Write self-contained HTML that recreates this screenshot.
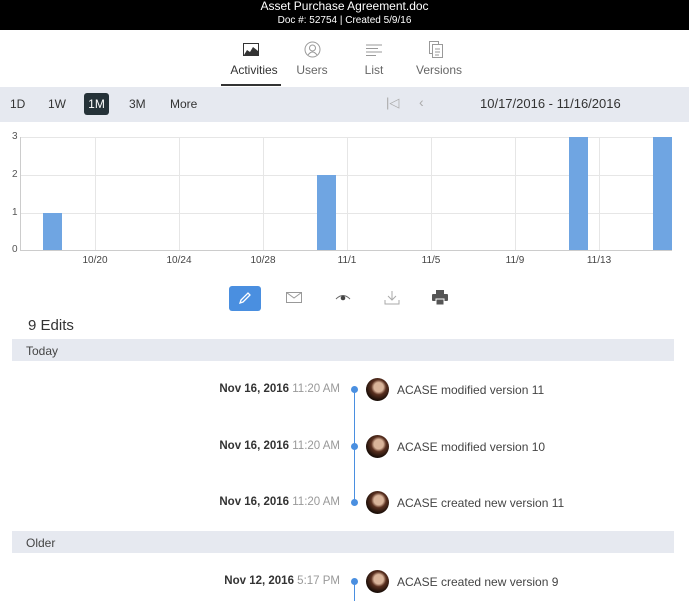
<!DOCTYPE html><html><head><style>
*{margin:0;padding:0;box-sizing:border-box}
body{width:689px;height:600px;overflow:hidden;background:#fff;font-family:"Liberation Sans",sans-serif;position:relative;color:#333}
.a{position:absolute;white-space:nowrap}
.t{font-size:12px;color:#666;text-align:center;width:70px}
.f{font-size:12px;color:#333;top:97px}
.yl{font-size:10px;color:#555;left:0;width:16px;text-align:left}
.xl{font-size:10px;color:#444;top:255px;width:40px;text-align:center}
.gh{left:20px;width:652px;height:1px;background:#e6e6e6}
.gv{top:137px;width:1px;height:113px;background:#e6e6e6}
.bar{background:#6fa5e2;width:19px}
.sec{left:12px;width:662px;height:22px;background:#e6e9f0;font-size:12px;color:#444;padding:5px 0 0 14px}
.dt{font-size:11.5px;width:330px;text-align:right;left:10px;color:#333}
.dt b{color:#333}.dt span{color:#999}
.dot{left:351px;width:7px;height:7px;border-radius:50%;background:#4a8fe0}
.av{left:366px;width:23px;height:23px;border-radius:50%;background:radial-gradient(circle at 55% 40%,#d9b49a 0 25%,#5a3020 40%,#1a0e08 70%)}
.tx{left:397px;font-size:12px;color:#444}
</style></head><body>
<div class="a" style="left:0;top:0;width:689px;height:30px;background:#000"></div>
<div class="a" style="left:0;top:-1px;width:689px;text-align:center;color:#fff;font-size:12px">Asset Purchase Agreement.doc</div>
<div class="a" style="left:0;top:15px;width:689px;text-align:center;color:#fff;font-size:10px">Doc #: 52754 | Created 5/9/16</div>
<svg class="a" style="left:243px;top:43px" width="16" height="13"><rect x="0.5" y="0.5" width="15" height="12" fill="none" stroke="#333"/><path d="M1 12 L4 7 L7 9 L10 4 L15 8 L15 12Z" fill="#333"/></svg>
<svg class="a" style="left:304px;top:41px" width="17" height="17"><circle cx="8.5" cy="8.5" r="7.5" fill="none" stroke="#999"/><circle cx="8.5" cy="7" r="3" fill="none" stroke="#999"/><path d="M4 14 Q8.5 8 13 14" fill="none" stroke="#999"/></svg>
<svg class="a" style="left:366px;top:44px" width="16" height="12" stroke="#999"><path d="M0 1H16M0 4.5H12M0 8H16M0 11.5H10"/></svg>
<svg class="a" style="left:429px;top:41px" width="14" height="17" fill="none" stroke="#999"><rect x="0.5" y="0.5" width="9" height="12"/><rect x="3.5" y="3.5" width="10" height="13" fill="#fff"/><path d="M6 8H11M6 11H11M6 14H10"/></svg>
<div class="a t" style="left:219px;top:63px;color:#333">Activities</div>
<div class="a t" style="left:277px;top:63px">Users</div>
<div class="a t" style="left:339px;top:63px">List</div>
<div class="a t" style="left:404px;top:63px">Versions</div>
<div class="a" style="left:221px;top:84px;width:60px;height:2px;background:#333"></div>
<div class="a" style="left:0;top:87px;width:689px;height:35px;background:#e6e9f0"></div>
<div class="a f" style="left:10px">1D</div>
<div class="a f" style="left:48px">1W</div>
<div class="a" style="left:84px;top:93px;width:25px;height:22px;background:#253238;border-radius:3px;color:#fff;font-size:12px;text-align:center;padding-top:4px">1M</div>
<div class="a f" style="left:129px">3M</div>
<div class="a f" style="left:170px">More</div>
<div class="a" style="left:386px;top:95px;font-size:13px;color:#aaa">|◁</div>
<div class="a" style="left:419px;top:94px;font-size:14px;color:#aaa">‹</div>
<div class="a" style="left:480px;top:96px;font-size:13px;color:#333">10/17/2016 - 11/16/2016</div>
<div class="a gh" style="top:137px"></div><div class="a gh" style="top:175px"></div><div class="a gh" style="top:213px"></div><div class="a gh" style="top:250px;background:#ccc"></div>
<div class="a gv" style="left:20px;background:#ccc"></div>
<div class="a gv" style="left:95px"></div><div class="a gv" style="left:179px"></div><div class="a gv" style="left:263px"></div><div class="a gv" style="left:347px"></div><div class="a gv" style="left:431px"></div><div class="a gv" style="left:515px"></div><div class="a gv" style="left:599px"></div>
<div class="a yl" style="top:131px;left:12px">3</div><div class="a yl" style="top:169px;left:12px">2</div><div class="a yl" style="top:207px;left:12px">1</div><div class="a yl" style="top:244px;left:12px">0</div>
<div class="a bar" style="left:43px;top:213px;height:37px"></div>
<div class="a bar" style="left:317px;top:175px;height:75px"></div>
<div class="a bar" style="left:569px;top:137px;height:113px"></div>
<div class="a bar" style="left:653px;top:137px;height:113px"></div>
<div class="a xl" style="left:75px">10/20</div><div class="a xl" style="left:159px">10/24</div><div class="a xl" style="left:243px">10/28</div><div class="a xl" style="left:327px">11/1</div><div class="a xl" style="left:411px">11/5</div><div class="a xl" style="left:495px">11/9</div><div class="a xl" style="left:579px">11/13</div>
<div class="a" style="left:229px;top:286px;width:32px;height:25px;background:#4a8fe0;border-radius:3px"></div>
<svg class="a" style="left:238px;top:291px" width="14" height="14" fill="none" stroke="#fff" stroke-width="1.3"><path d="M2 12 L3 9 L10 2 L12 4 L5 11Z"/></svg>
<svg class="a" style="left:286px;top:292px" width="16" height="11" fill="none" stroke="#999"><rect x="0.5" y="0.5" width="15" height="10"/><path d="M0.5 0.5 L8 6 L15.5 0.5"/></svg>
<svg class="a" style="left:335px;top:293px" width="16" height="9"><path d="M1 6 Q8 -1 15 6" fill="none" stroke="#666"/><circle cx="8" cy="5" r="2.3" fill="#444"/></svg>
<svg class="a" style="left:384px;top:290px" width="16" height="15" fill="none" stroke="#aaa"><path d="M8 1V10M4 6L8 10L12 6M1 10V14H15V10"/></svg>
<svg class="a" style="left:432px;top:290px" width="16" height="15"><rect x="4" y="0" width="8" height="4" fill="#555"/><rect x="0" y="4" width="16" height="7" rx="1" fill="#555"/><rect x="4" y="9" width="8" height="6" fill="#555" stroke="#fff"/></svg>
<div class="a" style="left:28px;top:317px;font-size:15px;color:#333">9 Edits</div>
<div class="a sec" style="top:339px">Today</div>
<div class="a sec" style="top:531px">Older</div>
<div class="a" style="left:354px;top:389px;width:1px;height:113px;background:#4a8fe0"></div>
<div class="a" style="left:354px;top:581px;width:1px;height:20px;background:#4a8fe0"></div>
<div class="a dt" style="top:383px"><b>Nov 16, 2016</b> <span>11:20 AM</span></div>
<div class="a dt" style="top:440px"><b>Nov 16, 2016</b> <span>11:20 AM</span></div>
<div class="a dt" style="top:496px"><b>Nov 16, 2016</b> <span>11:20 AM</span></div>
<div class="a dt" style="top:575px"><b>Nov 12, 2016</b> <span>5:17 PM</span></div>
<div class="a dot" style="top:386px"></div><div class="a dot" style="top:443px"></div><div class="a dot" style="top:499px"></div><div class="a dot" style="top:578px"></div>
<div class="a av" style="top:378px"></div><div class="a av" style="top:435px"></div><div class="a av" style="top:491px"></div><div class="a av" style="top:570px"></div>
<div class="a tx" style="top:383px">ACASE modified version 11</div>
<div class="a tx" style="top:440px">ACASE modified version 10</div>
<div class="a tx" style="top:496px">ACASE created new version 11</div>
<div class="a tx" style="top:575px">ACASE created new version 9</div>
</body></html>
